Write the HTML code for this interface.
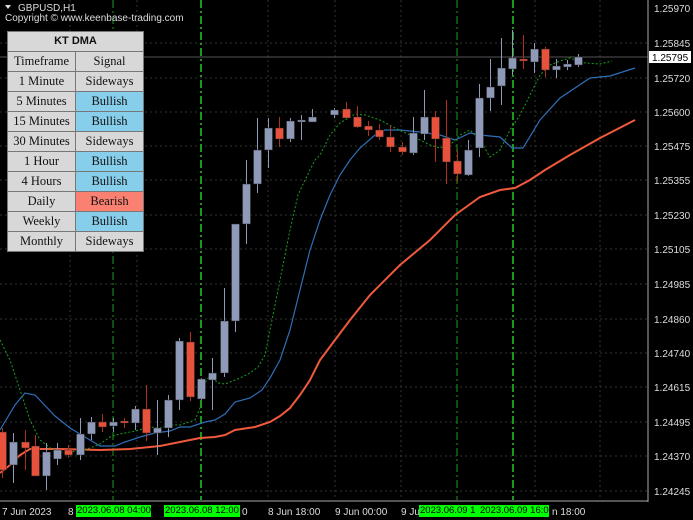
<!DOCTYPE html>
<html><head><meta charset="utf-8"><style>
*{margin:0;padding:0}
body{width:693px;height:520px;background:#000;overflow:hidden;position:relative;font-family:"Liberation Sans",sans-serif}
svg{position:absolute;left:0;top:0}
.tb{position:absolute;left:7px;top:31px;border-collapse:collapse;font-family:"Liberation Serif",serif;font-size:12.5px;color:#111}
.tb td{width:67px;height:19px;border:1px solid #777;background:#d8d8d8;text-align:center;padding:0;line-height:19px}
.tb td.b{background:#87ceeb}.tb td.r{background:#fa8072}
.tb td.h{font-family:"Liberation Sans",sans-serif;font-weight:bold;font-size:11px}
.gl{position:absolute;top:505px;height:12px;background:#00ff00;color:#000;font-size:9.5px;line-height:12px;padding:0 1px;white-space:nowrap;overflow:hidden}
</style></head><body>
<svg width="693" height="520" font-family="Liberation Sans" font-size="10">
<g stroke="#333" stroke-dasharray="2,3" stroke-width="1">
<line x1="0" y1="43" x2="648" y2="43"/><line x1="0" y1="78" x2="648" y2="78"/><line x1="0" y1="112" x2="648" y2="112"/><line x1="0" y1="146" x2="648" y2="146"/><line x1="0" y1="180" x2="648" y2="180"/><line x1="0" y1="215" x2="648" y2="215"/><line x1="0" y1="249" x2="648" y2="249"/><line x1="0" y1="284" x2="648" y2="284"/><line x1="0" y1="319" x2="648" y2="319"/><line x1="0" y1="353" x2="648" y2="353"/><line x1="0" y1="387" x2="648" y2="387"/><line x1="0" y1="422" x2="648" y2="422"/><line x1="0" y1="456" x2="648" y2="456"/><line x1="0" y1="491" x2="648" y2="491"/>
<line x1="70" y1="0" x2="70" y2="500"/><line x1="137" y1="0" x2="137" y2="500"/><line x1="268" y1="0" x2="268" y2="500"/><line x1="335" y1="0" x2="335" y2="500"/><line x1="401" y1="0" x2="401" y2="500"/><line x1="535" y1="0" x2="535" y2="500"/><line x1="600" y1="0" x2="600" y2="500"/>
</g>
<g stroke="#1a9a1a" stroke-dasharray="8,3,2,3">
<line x1="113" y1="0" x2="113" y2="500" stroke-width="1"/><line x1="201" y1="0" x2="201" y2="500" stroke-width="2"/><line x1="457" y1="0" x2="457" y2="500" stroke-width="1"/><line x1="513" y1="0" x2="513" y2="500" stroke-width="2"/>
</g>
<line x1="0" y1="57" x2="648" y2="57" stroke="#555"/>
<polyline fill="none" stroke="#f05a3c" stroke-width="2" points="0,473 10,465 20,455 30,449 60,449 100,450 130,449 160,446 200,438 215,437 225,435 235,430 255,427 270,422 280,416 290,408 300,395 310,380 320,360 335,340 350,320 370,295 400,265 430,240 455,215 480,197 500,190 515,188 530,180 545,170 570,155 600,138 635,120"/>
<polyline fill="none" stroke="#2f6fb8" stroke-width="1.2" points="0,430 15,405 25,393 35,395 55,416 70,428 90,440 100,446 115,446 125,442 140,437 155,433 170,431 180,427 190,427 205,422 215,420 225,414 235,402 250,398 262,390 270,378 280,360 290,330 300,290 310,250 320,220 330,195 340,175 350,160 360,148 375,135 385,130 400,130 420,132 440,135 455,140 470,133 480,135 500,137 512,148 523,148 540,120 560,98 575,88 590,78 610,76 635,68"/>
<polyline fill="none" stroke="#1aa01a" stroke-width="1" stroke-dasharray="2,2" points="0,340 10,360 20,390 30,420 40,440 50,448 60,452 70,452 85,450 100,444 110,437 120,434 135,431 150,427 160,428 170,425 180,425 195,420 200,408 205,383 210,375 218,383 225,384 240,378 250,373 258,367 265,355 270,330 280,280 290,230 298,195 305,180 315,160 320,155 330,135 340,123 355,114 365,115 380,120 395,128 410,135 420,140 430,145 440,148 450,145 460,135 470,130 480,140 490,157 500,150 510,130 520,115 530,95 540,75 550,65 560,61 570,58 585,63 600,64 612,61"/>
<g id="c" stroke-width="1"></g>
<line x1="648" y1="0" x2="648" y2="502" stroke="#aaa"/>
<line x1="0" y1="501" x2="648" y2="501" stroke="#aaa"/>
<g fill="#ddd">
<text x="654" y="12">1.25970</text><text x="654" y="47">1.25845</text><text x="654" y="82">1.25720</text><text x="654" y="116">1.25600</text><text x="654" y="150">1.25475</text><text x="654" y="184">1.25355</text><text x="654" y="219">1.25230</text><text x="654" y="253">1.25105</text><text x="654" y="288">1.24985</text><text x="654" y="323">1.24860</text><text x="654" y="357">1.24740</text><text x="654" y="391">1.24615</text><text x="654" y="426">1.24495</text><text x="654" y="460">1.24370</text><text x="654" y="495">1.24245</text>
<text x="2" y="515">7 Jun 2023</text><text x="68" y="515">8</text><text x="242" y="515">0</text><text x="268" y="515">8 Jun 18:00</text><text x="335" y="515">9 Jun 00:00</text><text x="401" y="515">9 Jun</text><text x="552" y="515">n 18:00</text>
<text x="18" y="11">GBPUSD,H1</text><text x="5" y="21">Copyright © www.keenbase-trading.com</text>
</g>
<path d="M5,5 L11,5 L8,9 Z" fill="#ddd"/>
<rect x="649" y="51" width="42" height="12" fill="#fff"/>
<text x="652" y="61" fill="#000">1.25795</text>
</svg>
<script>
var C=[[2,428,478,432,470,'r'],[13,433,483,442,465,'g'],[25,430,470,442,448,'r'],[35,435,476,446,476,'r'],[46,443,490,452,476,'g'],[57,443,465,450,459,'g'],[68,445,458,450,455,'r'],[80,418,460,434,455,'g'],[91,417,440,422,434,'g'],[102,414,432,422,427,'r'],[113,418,432,422,426,'g'],[124,418,428,421,423,'r'],[135,406,430,409,423,'g'],[146,385,441,409,433,'r'],[157,400,455,428,433,'g'],[168,395,437,400,428,'g'],[179,338,410,341,400,'g'],[190,332,401,342,397,'r'],[201,378,400,379,399,'g'],[212,358,410,373,380,'g'],[224,288,377,321,373,'g'],[235,224,332,224,321,'g'],[246,160,244,184,224,'g'],[257,118,193,150,184,'g'],[268,118,168,128,150,'g'],[279,117,147,128,139,'r'],[290,118,142,121,139,'g'],[301,115,140,120,122,'g'],[312,109,122,117,122,'g'],[334,108,118,110,115,'g'],[346,102,118,109,118,'r'],[357,106,128,117,127,'r'],[368,121,136,126,130,'r'],[379,124,140,130,137,'r'],[390,125,152,137,147,'r'],[402,142,155,147,152,'r'],[413,117,155,133,153,'g'],[424,90,140,117,134,'g'],[435,111,162,117,139,'r'],[446,100,184,138,162,'r'],[457,150,182,161,174,'r'],[468,140,176,150,175,'g'],[479,84,157,98,148,'g'],[490,59,111,87,98,'g'],[501,38,105,68,86,'g'],[512,30,75,58,69,'g'],[523,35,69,59,61,'r'],[534,43,73,49,62,'g'],[545,47,77,49,70,'r'],[556,59,78,66,70,'g'],[567,60,70,64,67,'g'],[578,54,67,57,65,'g']];
var g=document.getElementById('c'),s='';
C.forEach(function(c){var col=c[5]=='r'?'#e8523c':'#8e9ab8',wc=c[5]=='r'?'#b03020':'#8e9ab8';
s+='<line x1="'+(c[0]+.5)+'" y1="'+c[1]+'" x2="'+(c[0]+.5)+'" y2="'+c[2]+'" stroke="'+wc+'"/>';
s+='<rect x="'+(c[0]-3.5)+'" y="'+c[3]+'" width="8" height="'+Math.max(1,c[4]-c[3])+'" fill="'+col+'" stroke="#222" stroke-width="0.5"/>';});
g.innerHTML=s;
</script>
<table class="tb">
<tr><td class="h" colspan="2" style="width:135px">KT DMA</td></tr>
<tr><td>Timeframe</td><td>Signal</td></tr>
<tr><td>1 Minute</td><td>Sideways</td></tr>
<tr><td>5 Minutes</td><td class="b">Bullish</td></tr>
<tr><td>15 Minutes</td><td class="b">Bullish</td></tr>
<tr><td>30 Minutes</td><td>Sideways</td></tr>
<tr><td>1 Hour</td><td class="b">Bullish</td></tr>
<tr><td>4 Hours</td><td class="b">Bullish</td></tr>
<tr><td>Daily</td><td class="r">Bearish</td></tr>
<tr><td>Weekly</td><td class="b">Bullish</td></tr>
<tr><td>Monthly</td><td>Sideways</td></tr>
</table>
<div class="gl" style="left:76px;width:73px">2023.06.08 04:00</div>
<div class="gl" style="left:164px;width:74px">2023.06.08 12:00</div>
<div class="gl" style="left:419px;width:58px">2023.06.09 1</div>
<div class="gl" style="left:479px;width:68px">2023.06.09 16:00</div>
</body></html>
